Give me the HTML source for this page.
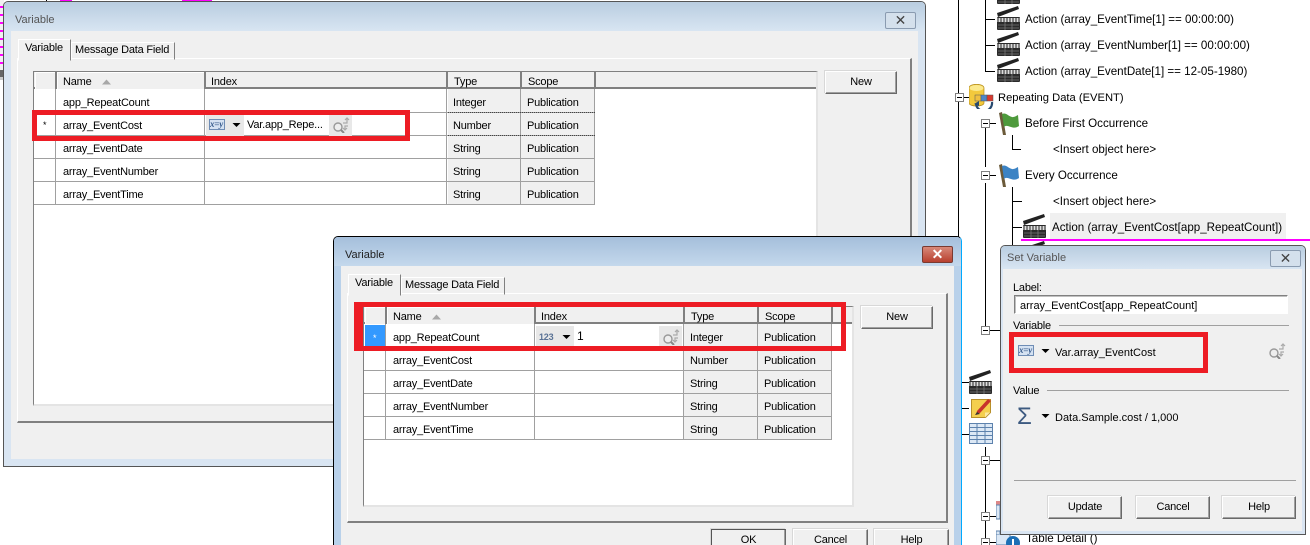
<!DOCTYPE html>
<html><head><meta charset="utf-8"><style>
html,body{margin:0;padding:0;background:#fff}
#p{position:relative;width:1310px;height:545px;overflow:hidden;background:#fff;font-family:"Liberation Sans",sans-serif;font-size:11px;letter-spacing:-.2px;color:#000}
#p div,#p svg{position:absolute}
.t{white-space:nowrap;height:14px;line-height:14px;margin-top:1px}
#p .n{margin-top:0}
#p .v{font-size:11.6px;letter-spacing:0}
#p .w{letter-spacing:0}
.l{background:#a0a0a0}
.k{background:#000}
.b{background:#f0f0f0;border:1px solid;border-color:#fff #696969 #696969 #fff;box-shadow:inset -1px -1px 0 #a0a0a0,-1px -1px 0 #d8d8d8;text-align:center;height:21px;line-height:20px;box-sizing:content-box}
.h{background:#f0f0f0;border-top:1px solid #fff;border-left:1px solid #fff;box-sizing:border-box;height:17px}
.r{border:5px solid #ed1c24;box-sizing:border-box}
.e{width:7px;height:7px;background:#fff;border:1px solid #808080}
.e:after{content:"";position:absolute;left:1px;top:3px;width:5px;height:1px;background:#000}
</style></head><body><div id="p">
<svg width="0" height="0" style="position:absolute">
<defs>
<symbol id="cl" viewBox="0 0 23 24"><path d="M0 7L21 0l1 3L1 11z" fill="#222"/><rect x="0" y="11" width="23" height="13" rx="1" fill="#2b2b2b"/><rect x="0" y="12" width="23" height="4" fill="#ddd"/><path d="M1 12v4M4 12v4M7 12v4M10 12v4M13 12v4M16 12v4M19 12v4M22 12v4" stroke="#222"/><path d="M1 19h21M1 22h21M8 16v8M15 16v8" stroke="#777" stroke-width=".8"/></symbol>
<symbol id="mg" viewBox="0 0 18 16"><circle cx="6" cy="10" r="4" fill="#eee" stroke="#999" stroke-width="1.4"/><path d="M9 13l3 3" stroke="#888" stroke-width="2"/><path d="M11 6h4V1M13 3l2-2 2 2M16 9h-3v4M11 11l2 2 2-2" fill="none" stroke="#aaa" stroke-width="1.2"/></symbol>
<symbol id="xy" viewBox="0 0 16 11"><rect x=".5" y=".5" width="15" height="10" fill="#d5e2f2" stroke="#6f8db5"/></symbol>
<symbol id="ar" viewBox="0 0 8 4"><path d="M0 0h8L4 4z" fill="#000"/></symbol>
<symbol id="fl" viewBox="0 0 21 24"><path d="M1 2l3-1 4 23H5z" fill="#6b5a3a"/><path d="M4 3C8 1 10 5 14 6c2 .5 4-1 6-2l1 11c-3 2-5 2-8 1-3-1-5-2-7 0z" fill="currentColor"/></symbol>
</defs></svg>

<!-- top/left background remnants -->
<div style="left:0;top:0;width:4px;height:70px;background:repeating-linear-gradient(#f0f0f0 0 6px,#f0f 6px,#f0f 8px)"></div>
<div style="left:0;top:70px;width:4px;height:7px;background:#666"></div>
<div style="left:0;top:77px;width:4px;height:3px;background:#ccc"></div>
<div style="left:60px;top:0;width:12px;height:1px;background:#f0f"></div>
<div style="left:182px;top:0;width:30px;height:1px;background:#f0f"></div>
<div class="k" style="left:46px;top:0;width:1px;height:1px"></div>

<!-- TREE -->
<div class="k" style="left:958px;top:0;width:1px;height:93px"></div>
<div class="k" style="left:958px;top:101px;width:1px;height:140px"></div>
<div class="k" style="left:985px;top:0;width:1px;height:71px"></div>
<div class="k" style="left:985px;top:19px;width:10px;height:1px"></div>
<div class="k" style="left:985px;top:45px;width:10px;height:1px"></div>
<div class="k" style="left:985px;top:71px;width:10px;height:1px"></div>
<svg style="left:997px;top:-20px" width="23" height="24"><use href="#cl"/></svg>
<svg style="left:997px;top:6px" width="23" height="24"><use href="#cl"/></svg>
<svg style="left:997px;top:32px" width="23" height="24"><use href="#cl"/></svg>
<svg style="left:997px;top:58px" width="23" height="24"><use href="#cl"/></svg>
<div class="t v" style="left:1025px;top:12px">Action (array_EventTime[1] == 00:00:00)</div>
<div class="t v" style="left:1025px;top:38px">Action (array_EventNumber[1] == 00:00:00)</div>
<div class="t v" style="left:1025px;top:64px">Action (array_EventDate[1] == 12-05-1980)</div>

<div class="e" style="left:955px;top:93px"></div>
<div class="k" style="left:964px;top:97px;width:5px;height:1px"></div>
<svg style="left:969px;top:84px" width="25" height="25" viewBox="0 0 25 25"><path d="M0 4c0-5 15-5 15 0v15c0 4-15 4-15 0z" fill="#f3c93c" stroke="#b08a20" stroke-width=".7"/><ellipse cx="7.500" cy="4" rx="7" ry="3" fill="#fbe98e"/><path d="M7 20a8 8 0 0 0 16-2" fill="none" stroke="#27496f" stroke-width="2.200"/><path d="M5 20l5-3v5z" fill="#27496f"/><rect x="6" y="11" width="6" height="6" fill="#f0c040" stroke="#555" stroke-width=".5"/><rect x="12" y="11" width="6" height="6" fill="#4e86c8" stroke="#555" stroke-width=".5"/><rect x="18" y="11" width="6" height="6" fill="#d83a30" stroke="#555" stroke-width=".5"/></svg>
<div class="t v" style="left:998px;top:90px;font-size:11.2px">Repeating Data (EVENT)</div>

<div class="k" style="left:985px;top:128px;width:1px;height:39px"></div>
<div class="k" style="left:985px;top:183px;width:1px;height:62px"></div>
<div class="e" style="left:981px;top:119px"></div>
<div class="k" style="left:990px;top:123px;width:6px;height:1px"></div>
<svg style="left:998px;top:111px;color:#4e9a3c" width="21" height="24"><use href="#fl"/></svg>
<div class="t v" style="left:1025px;top:116px">Before First Occurrence</div>
<div class="k" style="left:1012px;top:135px;width:1px;height:14px"></div>
<div class="k" style="left:1012px;top:149px;width:9px;height:1px"></div>
<div class="t v" style="left:1053px;top:142px">&lt;Insert object here&gt;</div>

<div class="e" style="left:981px;top:171px"></div>
<div class="k" style="left:990px;top:175px;width:6px;height:1px"></div>
<svg style="left:998px;top:163px;color:#3c83c4" width="21" height="24"><use href="#fl"/></svg>
<div class="t v" style="left:1025px;top:168px">Every Occurrence</div>
<div class="k" style="left:1012px;top:187px;width:1px;height:58px"></div>
<div class="k" style="left:1012px;top:201px;width:10px;height:1px"></div>
<div class="t v" style="left:1053px;top:194px">&lt;Insert object here&gt;</div>
<div class="k" style="left:1012px;top:227px;width:10px;height:1px"></div>
<div style="left:1050px;top:213px;width:236px;height:27px;background:#f0f0f0"></div>
<svg style="left:1023px;top:214px" width="23" height="24"><use href="#cl"/></svg>
<div class="t v" style="left:1052px;top:220px">Action (array_EventCost[app_RepeatCount])</div>
<svg style="left:1023px;top:241px" width="23" height="24"><use href="#cl"/></svg>
<div style="left:1021px;top:239px;width:289px;height:2px;background:#f0f"></div>

<div class="k" style="left:985px;top:245px;width:1px;height:82px"></div>
<div class="e" style="left:981px;top:326px"></div>
<div class="k" style="left:990px;top:330px;width:10px;height:1px"></div>
<div class="k" style="left:962px;top:382px;width:7px;height:1px"></div>
<svg style="left:969px;top:370px" width="23" height="24"><use href="#cl"/></svg>
<div class="k" style="left:962px;top:408px;width:7px;height:1px"></div>
<svg style="left:971px;top:397px" width="22" height="22" viewBox="0 0 22 22"><path d="M.5 2.500h19v13l-5 5H.500z" fill="#f4cf4e" stroke="#b8902a"/><path d="M14 20.500v-5h5z" fill="#fbe9a5"/><path d="M6 14L17 2l3 2L9 16l-4 2z" fill="#c8332b"/><path d="M4 18l2-3 3 2z" fill="#333"/></svg>
<div class="k" style="left:962px;top:434px;width:7px;height:1px"></div>
<svg style="left:969px;top:423px" width="24" height="21" viewBox="0 0 24 21"><rect x=".5" y=".5" width="23" height="20" fill="#dce8f5" stroke="#5d82ad"/><path d="M.5 4.500h23M.5 8.500h23M.5 12.500h23M.5 16.500h23M8 .5v20M16 .5v20" stroke="#5d82ad" fill="none"/></svg>
<div class="k" style="left:985px;top:447px;width:1px;height:98px"></div>
<div class="e" style="left:981px;top:456px"></div>
<div class="k" style="left:990px;top:460px;width:10px;height:1px"></div>
<div class="e" style="left:981px;top:512px"></div>
<div class="k" style="left:990px;top:516px;width:6px;height:1px"></div>
<div class="e" style="left:981px;top:538px"></div>
<div class="k" style="left:990px;top:542px;width:6px;height:1px"></div>
<svg style="left:996px;top:501px" width="4" height="44"><rect width="4" height="4" fill="#d88"/><rect y="4" width="4" height="14" fill="#dce8f5" stroke="#5d82ad"/><rect y="30" width="4" height="14" fill="#dce8f5" stroke="#5d82ad"/></svg>
<svg style="left:996px;top:534px" width="30" height="11"><rect width="14" height="11" fill="#dce8f5" stroke="#5d82ad"/><circle cx="17" cy="9" r="7" fill="#1d6fb5"/><rect x="16" y="5" width="2" height="6" fill="#fff"/></svg>
<div class="t v" style="left:1026px;top:531px">Table Detail ()</div>

<!-- DIALOG 1 -->
<div style="left:3px;top:1px;width:921px;height:464px;border:1px solid #555;border-radius:5px 5px 0 0;background:#d9e5f2"></div>
<div style="left:4px;top:2px;width:921px;height:29px;border-radius:4px 4px 0 0;background:linear-gradient(#b9cde0,#d8e5f2)"></div>
<div style="left:11px;top:31px;width:907px;height:428px;background:#f0f0f0"></div>
<div class="t n" style="left:15px;top:13px;color:#555;letter-spacing:0">Variable</div>
<div style="left:885px;top:12px;width:29px;height:15px;border:1px solid #8a9bb0;border-radius:2px;background:#d4e0ec;color:#444;font-size:14px;line-height:14px;text-align:center;letter-spacing:0">✕</div>
<div style="left:17px;top:58px;width:892px;height:362px;border:1px solid;border-color:#fff #808080 #808080 #fff;border-width:1px 2px 2px 1px"></div>
<div style="left:71px;top:42px;width:102px;height:16px;border:1px solid;border-color:#fff #808080 #f0f0f0 #fff"></div>
<div class="t n" style="left:75px;top:43px">Message Data Field</div>
<div style="left:18px;top:39px;width:51px;height:20px;background:#f0f0f0;border:1px solid;border-color:#fff #808080 #f0f0f0 #fff"></div>
<div class="t n" style="left:25px;top:41px">Variable</div>
<div style="left:33px;top:71px;width:782px;height:332px;background:#fff;border:1px solid;border-color:#808080 #e4e4e4 #e4e4e4 #808080;border-width:1px 2px 2px 1px"></div>
<div style="left:34px;top:72px;width:782px;height:17px;background:#f0f0f0;border-bottom:2px solid #808080;box-sizing:border-box"></div>
<div class="h" style="left:35px;top:72px;width:20px"></div><div class="h" style="left:57px;top:72px;width:147px"></div>
<div style="left:55px;top:72px;width:2px;height:17px;background:#808080"></div>
<div style="left:204px;top:72px;width:2px;height:17px;background:#808080"></div>
<div style="left:446px;top:72px;width:2px;height:17px;background:#808080"></div>
<div style="left:520px;top:72px;width:2px;height:17px;background:#808080"></div>
<div style="left:594px;top:72px;width:2px;height:17px;background:#808080"></div>
<div style="left:448px;top:89px;width:146px;height:115px;background:#f0f0f0"></div>
<div class="l" style="left:34px;top:112px;width:561px;height:1px"></div>
<div class="l" style="left:34px;top:135px;width:561px;height:1px"></div>
<div class="l" style="left:34px;top:158px;width:561px;height:1px"></div>
<div class="l" style="left:34px;top:181px;width:561px;height:1px"></div>
<div class="l" style="left:34px;top:204px;width:561px;height:1px"></div>
<div class="l" style="left:55px;top:89px;width:1px;height:115px"></div>
<div class="l" style="left:204px;top:89px;width:1px;height:115px"></div>
<div class="l" style="left:446px;top:89px;width:1px;height:115px"></div>
<div class="l" style="left:520px;top:89px;width:1px;height:115px"></div>
<div class="l" style="left:594px;top:89px;width:1px;height:115px"></div>
<div class="t n" style="left:63px;top:75px">Name</div>
<svg style="left:102px;top:79px" width="10" height="6"><path d="M0 5.500L4.500 .5 9 5.500z" fill="#a8a8a8"/></svg>
<div class="t n" style="left:211px;top:75px">Index</div>
<div class="t n" style="left:454px;top:75px">Type</div>
<div class="t n" style="left:528px;top:75px">Scope</div>
<div class="t" style="left:63px;top:95px">app_RepeatCount</div>
<div class="t" style="left:63px;top:118px">array_EventCost</div>
<div class="t" style="left:63px;top:141px">array_EventDate</div>
<div class="t" style="left:63px;top:164px">array_EventNumber</div>
<div class="t" style="left:63px;top:187px">array_EventTime</div>
<div class="t" style="left:453px;top:95px">Integer</div><div class="t" style="left:527px;top:95px">Publication</div>
<div class="t" style="left:453px;top:118px">Number</div><div class="t" style="left:527px;top:118px">Publication</div>
<div class="t" style="left:453px;top:141px">String</div><div class="t" style="left:527px;top:141px">Publication</div>
<div class="t" style="left:453px;top:164px">String</div><div class="t" style="left:527px;top:164px">Publication</div>
<div class="t" style="left:453px;top:187px">String</div><div class="t" style="left:527px;top:187px">Publication</div>
<div style="left:448px;top:112px;width:147px;height:1px;border-top:1px dotted #444;box-sizing:border-box"></div>
<div style="left:448px;top:135px;width:147px;height:1px;border-top:1px dotted #444;box-sizing:border-box"></div>
<div class="t n" style="left:43px;top:118px;font-size:9px">*</div>
<div style="left:206px;top:114px;width:38px;height:22px;background:#e8e8e8"></div>
<svg style="left:209px;top:119px" width="16" height="11"><use href="#xy"/></svg>
<div class="t n" style="left:210px;top:117px;font:italic bold 9px/14px 'Liberation Serif',serif;color:#3c5f8f">x=y</div>
<svg style="left:232px;top:123px" width="9" height="4"><use href="#ar"/></svg>
<div class="t" style="left:247px;top:117px">Var.app_Repe...</div>
<div style="left:329px;top:114px;width:23px;height:22px;background:#e8e8e8"></div>
<svg style="left:332px;top:117px" width="18" height="16"><use href="#mg"/></svg>
<div class="b" style="left:825px;top:71px;width:70px">New</div>
<div class="r" style="left:32px;top:110px;width:378px;height:31px"></div>

<!-- DIALOG 2 -->
<div style="left:333px;top:236px;width:627px;height:320px;border:1px solid #000;border-right-color:#0af;border-radius:5px 5px 0 0;background:#b9d1ea"></div>
<div style="left:334px;top:237px;width:627px;height:29px;border-radius:4px 4px 0 0;background:linear-gradient(#a5bfdb,#c4d8ec)"></div>
<div style="left:341px;top:266px;width:613px;height:279px;background:#f0f0f0"></div>
<div class="t n" style="left:345px;top:248px;color:#222;letter-spacing:0">Variable</div>
<div style="left:922px;top:246px;width:29px;height:15px;border:1px solid #7a3a30;border-radius:2px;background:linear-gradient(#d8897a,#b8402f);color:#fff;font-size:14px;line-height:14px;text-align:center;letter-spacing:0;font-weight:bold">✕</div>
<div style="left:347px;top:293px;width:598px;height:227px;border:1px solid;border-color:#fff #808080 #808080 #fff;border-width:1px 2px 2px 1px"></div>
<div style="left:401px;top:277px;width:102px;height:16px;border:1px solid;border-color:#fff #808080 #f0f0f0 #fff"></div>
<div class="t n" style="left:405px;top:278px">Message Data Field</div>
<div style="left:348px;top:274px;width:51px;height:20px;background:#f0f0f0;border:1px solid;border-color:#fff #808080 #f0f0f0 #fff"></div>
<div class="t n" style="left:355px;top:276px">Variable</div>
<div style="left:363px;top:306px;width:488px;height:198px;background:#fff;border:1px solid;border-color:#808080 #e4e4e4 #e4e4e4 #808080;border-width:1px 2px 2px 1px"></div>
<div style="left:364px;top:307px;width:488px;height:17px;background:#f0f0f0;border-bottom:2px solid #808080;box-sizing:border-box"></div>
<div class="h" style="left:365px;top:307px;width:20px"></div><div class="h" style="left:387px;top:307px;width:147px"></div>
<div style="left:385px;top:307px;width:2px;height:17px;background:#808080"></div>
<div style="left:534px;top:307px;width:2px;height:17px;background:#808080"></div>
<div style="left:683px;top:307px;width:2px;height:17px;background:#808080"></div>
<div style="left:757px;top:307px;width:2px;height:17px;background:#808080"></div>
<div style="left:831px;top:307px;width:2px;height:17px;background:#808080"></div>
<div style="left:684px;top:324px;width:147px;height:115px;background:#f0f0f0"></div>
<div class="l" style="left:364px;top:347px;width:468px;height:1px"></div>
<div class="l" style="left:364px;top:370px;width:468px;height:1px"></div>
<div class="l" style="left:364px;top:393px;width:468px;height:1px"></div>
<div class="l" style="left:364px;top:416px;width:468px;height:1px"></div>
<div class="l" style="left:364px;top:439px;width:468px;height:1px"></div>
<div class="l" style="left:385px;top:324px;width:1px;height:115px"></div>
<div class="l" style="left:534px;top:324px;width:1px;height:115px"></div>
<div class="l" style="left:683px;top:324px;width:1px;height:115px"></div>
<div class="l" style="left:757px;top:324px;width:1px;height:115px"></div>
<div class="l" style="left:831px;top:324px;width:1px;height:115px"></div>
<div style="left:365px;top:325px;width:20px;height:22px;background:#3399ff"></div>
<div class="t n" style="left:373px;top:331px;font-size:9px;color:#fff">*</div>
<div class="t n" style="left:393px;top:310px">Name</div>
<svg style="left:432px;top:314px" width="10" height="6"><path d="M0 5.500L4.500 .5 9 5.500z" fill="#a8a8a8"/></svg>
<div class="t n" style="left:541px;top:310px">Index</div>
<div class="t n" style="left:691px;top:310px">Type</div>
<div class="t n" style="left:765px;top:310px">Scope</div>
<div class="t" style="left:393px;top:330px">app_RepeatCount</div>
<div class="t" style="left:393px;top:353px">array_EventCost</div>
<div class="t" style="left:393px;top:376px">array_EventDate</div>
<div class="t" style="left:393px;top:399px">array_EventNumber</div>
<div class="t" style="left:393px;top:422px">array_EventTime</div>
<div class="t" style="left:690px;top:330px">Integer</div><div class="t" style="left:764px;top:330px">Publication</div>
<div class="t" style="left:690px;top:353px">Number</div><div class="t" style="left:764px;top:353px">Publication</div>
<div class="t" style="left:690px;top:376px">String</div><div class="t" style="left:764px;top:376px">Publication</div>
<div class="t" style="left:690px;top:399px">String</div><div class="t" style="left:764px;top:399px">Publication</div>
<div class="t" style="left:690px;top:422px">String</div><div class="t" style="left:764px;top:422px">Publication</div>
<div style="left:536px;top:326px;width:38px;height:21px;background:#e8e8e8"></div>
<div class="t n" style="left:539px;top:330px;font-size:9px;font-weight:bold;color:#5b7396">123</div>
<svg style="left:562px;top:335px" width="9" height="4"><use href="#ar"/></svg>
<div class="t n" style="left:577px;top:329px;font-size:12px">1</div>
<div style="left:659px;top:326px;width:23px;height:21px;background:#e8e8e8"></div>
<svg style="left:662px;top:329px" width="18" height="16"><use href="#mg"/></svg>
<div class="b" style="left:861px;top:306px;width:70px">New</div>
<div class="b" style="left:711px;top:529px;width:73px;border-top-color:#555;border-left-color:#555;">OK</div>
<div class="b" style="left:793px;top:529px;width:73px">Cancel</div>
<div class="b" style="left:874px;top:529px;width:73px">Help</div>
<div class="r" style="left:354px;top:302px;width:492px;height:49px;border-left-width:9px"></div>

<!-- DIALOG 3 -->
<div style="left:1000px;top:245px;width:304px;height:288px;border:1px solid #555;border-radius:5px 5px 0 0;background:#d9e5f2"></div>
<div style="left:1001px;top:246px;width:304px;height:23px;border-radius:4px 4px 0 0;background:linear-gradient(#b9cde0,#d8e5f2)"></div>
<div style="left:1003px;top:269px;width:299px;height:262px;background:#f0f0f0"></div>
<div class="t n" style="left:1007px;top:251px;color:#555;letter-spacing:0">Set Variable</div>
<div style="left:1270px;top:250px;width:29px;height:15px;border:1px solid #8a9bb0;border-radius:2px;background:#d4e0ec;color:#444;font-size:14px;line-height:14px;text-align:center;letter-spacing:0">✕</div>
<div class="t" style="left:1013px;top:280px">Label:</div>
<div style="left:1014px;top:295px;width:274px;height:19px;background:#fff;border:1px solid;border-color:#808080 #fff #fff #808080;box-sizing:border-box;box-shadow:inset 1px 1px 0 #c0c0c0"></div>
<div class="t w" style="left:1020px;top:298px">array_EventCost[app_RepeatCount]</div>
<div class="t n" style="left:1013px;top:319px">Variable</div>
<div class="l" style="left:1059px;top:325px;width:230px;height:1px"></div>
<svg style="left:1018px;top:345px" width="16" height="11"><use href="#xy"/></svg>
<div class="t n" style="left:1019px;top:343px;font:italic bold 9px/14px 'Liberation Serif',serif;color:#3c5f8f">x=y</div>
<svg style="left:1041px;top:349px" width="9" height="4"><use href="#ar"/></svg>
<div class="t w" style="left:1055px;top:345px">Var.array_EventCost</div>
<svg style="left:1268px;top:343px" width="18" height="16"><use href="#mg"/></svg>
<div class="r" style="left:1009px;top:332px;width:199px;height:41px"></div>
<div class="t n" style="left:1013px;top:384px">Value</div>
<div class="l" style="left:1047px;top:390px;width:242px;height:1px"></div>
<div class="t n" style="left:1017px;top:406px;font-size:24px;height:22px;line-height:22px;color:#3d5a80;letter-spacing:0">Σ</div>
<svg style="left:1041px;top:414px" width="9" height="4"><use href="#ar"/></svg>
<div class="t w" style="left:1055px;top:410px">Data.Sample.cost / 1,000</div>
<div class="l" style="left:1014px;top:480px;width:282px;height:1px"></div>
<div class="b" style="left:1048px;top:496px;width:72px">Update</div>
<div class="b" style="left:1136px;top:496px;width:72px">Cancel</div>
<div class="b" style="left:1222px;top:496px;width:72px">Help</div>
</div></body></html>
